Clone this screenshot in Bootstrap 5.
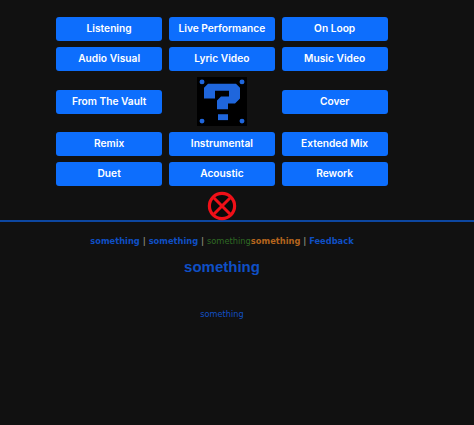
<!DOCTYPE html>
<html lang="en">
<head>
<meta charset="utf-8">
<title>Links</title>
<link href="https://cdn.jsdelivr.net/npm/bootstrap@5.3.0/dist/css/bootstrap.min.css" rel="stylesheet">
<style>
html,body{background:#111;height:100%;}
body{overflow:hidden;}
.page-top{width:332px;margin-left:56px;padding-top:17px;}
.cat-grid{display:grid;grid-template-columns:repeat(3,106.25px);column-gap:6.5px;row-gap:6px;align-items:center;justify-items:center;}
.cat-btn{width:100%;height:24px;padding:0;border-radius:3px;border:0;background:#0d6efd;color:#fff;font:600 10.2px/23px Inter,"Open Sans",sans-serif;}
.mystery{width:50px;height:49px;display:block;}
.x-mark{width:28px;height:28px;display:block;margin:6px 0 0 152px;overflow:visible;}
.rule{height:2px;background:#0d47a1;}
.foot{width:444px;text-align:center;}
.foot-links{font:700 8.3px/12px "DejaVu Sans",sans-serif;color:#8a8a7a;margin-top:13px;white-space:nowrap;}
.foot-links a{color:#0f4fc4;text-decoration:none;}
.foot-links a.g{color:#2f6b24;font-weight:400;}
.foot-links a.o{color:#b5651d;}
.foot-title{font:700 15px/18px "Liberation Sans",sans-serif;color:#0f4fc4;margin:11px 0 0;}
.foot-small{font:400 8.2px/12px "DejaVu Sans",sans-serif;color:#1250c4;margin-top:32px;}
</style>
</head>
<body>
<div class="page-top">
  <div class="cat-grid">
    <a class="btn cat-btn" href="#">Listening</a><a class="btn cat-btn" href="#">Live Performance</a><a class="btn cat-btn" href="#">On Loop</a>
    <a class="btn cat-btn" href="#">Audio Visual</a><a class="btn cat-btn" href="#">Lyric Video</a><a class="btn cat-btn" href="#">Music Video</a>
    <a class="btn cat-btn" href="#">From The Vault</a>
    <svg class="mystery" viewBox="0 0 50 50" preserveAspectRatio="none"><rect width="50" height="50" fill="#000"/><g fill="#1f66dc"><circle cx="5" cy="5" r="2.5"/><circle cx="45" cy="5" r="2.5"/><circle cx="5" cy="45" r="2.5"/><circle cx="45" cy="45" r="2.5"/><path d="M7 11L11 7H39L43 11V22L38 27H31V33H20V24L24 20H32V14H18V22H7Z"/><rect x="21" y="38" width="10" height="6"/></g></svg>
    <a class="btn cat-btn" href="#">Cover</a>
    <a class="btn cat-btn" href="#">Remix</a><a class="btn cat-btn" href="#">Instrumental</a><a class="btn cat-btn" href="#">Extended Mix</a>
    <a class="btn cat-btn" href="#">Duet</a><a class="btn cat-btn" href="#">Acoustic</a><a class="btn cat-btn" href="#">Rework</a>
  </div>
  <svg class="x-mark" viewBox="0 0 28 28"><circle cx="14" cy="14" r="12.6" fill="#0a0a0a" stroke="#f01018" stroke-width="3.2"/><path d="M6 6l16 16M22 6L6 22" stroke="#f01018" stroke-width="3"/></svg>
</div>
<div class="rule"></div>
<div class="foot">
  <div class="foot-links"><a href="#">something</a> | <a href="#">something</a> | <a class="g" href="#">something</a><a class="o" href="#">something</a> | <a href="#">Feedback</a></div>
  <h1 class="foot-title">something</h1>
  <div class="foot-small">something</div>
</div>
<script src="https://cdn.jsdelivr.net/npm/bootstrap@5.3.0/dist/js/bootstrap.bundle.min.js"></script>
</body>
</html>
